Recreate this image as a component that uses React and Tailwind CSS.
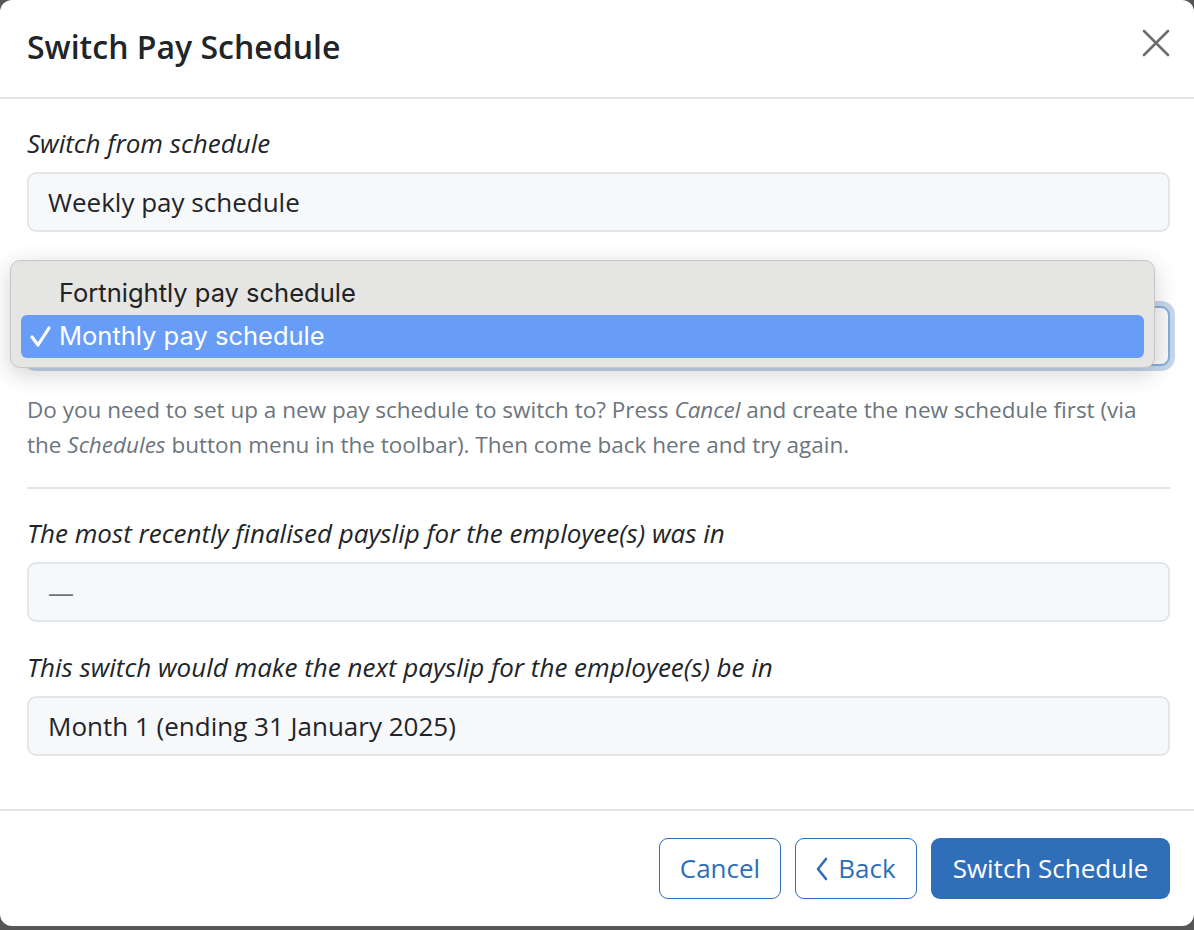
import React from "react";

export default function App() {
  return (
    <div className="relative w-[1194px] h-[930px] overflow-hidden bg-[#565656] font-['Open_Sans',sans-serif] text-[#212529]">
      <div className="bg-white rounded-[12px] h-[926px] flex flex-col">
        {/* Header */}
        <div className="h-[99px] shrink-0 border-b-2 border-[#e1e4e8] pl-[27px] pr-[24px] flex items-center justify-between">
          <h1 className="text-[32px] font-semibold leading-none mt-[-4px]">Switch Pay Schedule</h1>
          <svg width="28" height="28" viewBox="0 0 28 28" className="mt-[-12px]">
            <path d="M2 2 L26 26 M26 2 L2 26" stroke="#6e6e6e" strokeWidth="2.6" strokeLinecap="round" />
          </svg>
        </div>

        {/* Body */}
        <div className="flex-1 pl-[27px] pr-[24px] pt-[26px]">
          <div className="italic text-[26px] leading-[36px]">Switch from schedule</div>
          <div className="mt-[11px] h-[60px] rounded-[9px] border-2 border-[#e3e6e9] bg-[#f7f8fa] px-[19px] flex items-center text-[26px]">
            Weekly pay schedule
          </div>

          <div className="mt-[27px] italic text-[26px] leading-[36px]">Switch to schedule</div>
          <div className="mt-[11px] h-[60px] rounded-[9px] border-2 border-[#86add8] bg-[#f7f8fa] px-[19px] flex items-center text-[26px] shadow-[0_0_0_5px_rgba(47,110,184,0.28)]">
            Monthly pay schedule
          </div>

          <div className="mt-[26px] text-[22.5px] leading-[35px] text-[#6c757d]">
            Do you need to set up a new pay schedule to switch to? Press <i>Cancel</i> and create the new schedule first (via the <i>Schedules</i> button menu in the toolbar). Then come back here and try again.
          </div>

          <div className="mt-[25px] h-[2px] bg-[#e3e3e3]" />

          <div className="mt-[26px] italic text-[26px] leading-[36px]">The most recently finalised payslip for the employee(s) was in</div>
          <div className="mt-[11px] h-[60px] rounded-[9px] border-2 border-[#e3e6e9] bg-[#f7f8fa] px-[19px] flex items-center text-[26px] text-[#6c757d]">
            —
          </div>

          <div className="mt-[27px] italic text-[26px] leading-[36px]">This switch would make the next payslip for the employee(s) be in</div>
          <div className="mt-[11px] h-[60px] rounded-[9px] border-2 border-[#e3e6e9] bg-[#f7f8fa] px-[19px] flex items-center text-[26px]">
            Month 1 (ending 31 January 2025)
          </div>
        </div>

        {/* Footer */}
        <div className="h-[117px] shrink-0 border-t-2 border-[#e1e4e8] pl-[27px] pr-[24px] flex items-center justify-end gap-[14px]">
          <button className="h-[61px] w-[122px] rounded-[9px] border-[1.5px] border-[#2f6eb8] text-[#2f6eb8] text-[26px] flex items-center justify-center">
            Cancel
          </button>
          <button className="h-[61px] w-[122px] rounded-[9px] border-[1.5px] border-[#2f6eb8] text-[#2f6eb8] text-[26px] flex items-center justify-center gap-[10px]">
            <svg width="12" height="24" viewBox="0 0 12 24">
              <path d="M10 2 L2 12 L10 22" stroke="#2f6eb8" strokeWidth="2.6" fill="none" strokeLinecap="round" strokeLinejoin="round" />
            </svg>
            Back
          </button>
          <button className="h-[61px] w-[239px] rounded-[9px] bg-[#2f6fba] text-white text-[26px] flex items-center justify-center">
            Switch Schedule
          </button>
        </div>
      </div>

      {/* Native dropdown menu overlay */}
      <div className="absolute left-[10px] top-[260px] w-[1145px] h-[108px] rounded-[10px] border border-[#c6c6c6] bg-[#e5e5e4] shadow-[0_6px_24px_rgba(0,0,0,0.18)] px-[10px] pt-[11px] font-['Inter',sans-serif] text-[25.5px]">
        <div className="h-[43px] flex items-center pl-[38px] text-[#222222]">Fortnightly pay schedule</div>
        <div className="h-[43px] rounded-[6px] bg-[#679df6] flex items-center text-white">
          <svg width="38" height="43" viewBox="0 0 38 43">
            <path d="M11 22 L17 30 L28 13" stroke="white" strokeWidth="3.2" fill="none" strokeLinecap="round" strokeLinejoin="round" />
          </svg>
          Monthly pay schedule
        </div>
      </div>
    </div>
  );
}
